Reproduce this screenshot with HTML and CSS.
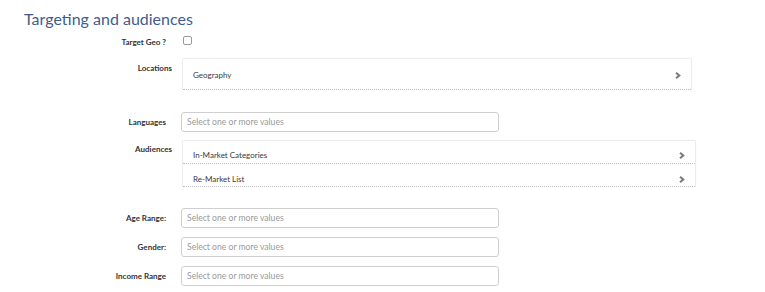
FILE: index.html
```html
<!DOCTYPE html>
<html>
<head>
<meta charset="utf-8">
<link rel="stylesheet" href="styles.css">
</head>
<body>
<h2 class="title">Targeting and audiences</h2>
<div class="form">
  <div class="row row-geo">
    <label class="label">Target Geo ?</label>
    <div class="field"><span class="checkbox"></span></div>
  </div>
  <div class="row row-locations">
    <label class="label label-panel">Locations</label>
    <div class="panel panel-locations">
      <div class="panel-item item-tall">
        <span>Geography</span>
        <svg class="chev" width="6" height="7" viewBox="0 0 6 7"><polyline points="1,0.8 4.3,3.5 1,6.2" fill="none" stroke="#7a7a7a" stroke-width="2"/></svg>
      </div>
    </div>
  </div>
  <div class="row row-languages">
    <label class="label">Languages</label>
    <div class="input">Select one or more values</div>
  </div>
  <div class="row row-audiences">
    <label class="label label-panel">Audiences</label>
    <div class="panel panel-audiences">
      <div class="panel-item">
        <span>In-Market Categories</span>
        <svg class="chev" width="6" height="7" viewBox="0 0 6 7"><polyline points="1,0.8 4.3,3.5 1,6.2" fill="none" stroke="#7a7a7a" stroke-width="2"/></svg>
      </div>
      <div class="panel-item">
        <span>Re-Market List</span>
        <svg class="chev" width="6" height="7" viewBox="0 0 6 7"><polyline points="1,0.8 4.3,3.5 1,6.2" fill="none" stroke="#7a7a7a" stroke-width="2"/></svg>
      </div>
    </div>
  </div>
  <div class="row row-age">
    <label class="label">Age Range:</label>
    <div class="input">Select one or more values</div>
  </div>
  <div class="row row-next">
    <label class="label">Gender:</label>
    <div class="input">Select one or more values</div>
  </div>
  <div class="row row-next">
    <label class="label">Income Range</label>
    <div class="input">Select one or more values</div>
  </div>
</div>
</body>
</html>
```

FILE: styles.css
```css
html, body {
  margin: 0;
  padding: 0;
  background: #ffffff;
}
body {
  font-family: Lato, "Open Sans", "Liberation Sans", sans-serif;
  color: #333333;
  width: 765px;
  height: 292px;
  overflow: hidden;
}
.title {
  margin: 0;
  padding: 8px 0 0 24px;
  font-size: 16px;
  line-height: 21px;
  font-weight: 400;
  color: #3f5d8c;
}
.form {
  display: flex;
  flex-direction: column;
}
.row {
  display: flex;
  align-items: flex-start;
}
.label {
  width: 166px;
  flex: 0 0 166px;
  text-align: right;
  font-size: 8px;
  font-weight: 700;
  line-height: 10px;
  color: #333333;
  padding-right: 15px;
  box-sizing: content-box;
}
.label-panel {
  width: 172px;
  flex: 0 0 172px;
  padding-right: 10px;
}
.row-geo {
  margin-top: 8px;
}
.field {
  padding-left: 2px;
}
.checkbox {
  display: block;
  width: 7px;
  height: 7px;
  border: 1px solid #9a9a9a;
  border-radius: 2px;
  background: #fff;
  margin-top: -1px;
}
.row-locations {
  margin-top: 11px;
}
.row-locations .label {
  padding-top: 5px;
}
.panel {
  border: 1px solid #ececec;
  border-bottom: none;
  border-radius: 2px 2px 0 0;
  box-shadow: 0 0 2px rgba(0, 0, 0, 0.04);
  box-sizing: border-box;
}
.panel-locations {
  width: 510px;
}
.panel-audiences {
  width: 514px;
}
.panel-item {
  display: flex;
  align-items: center;
  justify-content: space-between;
  font-size: 8px;
  line-height: 10px;
  color: #3a3a3a;
  border-bottom: 1px dotted #bdbdbd;
}
.panel-item.item-tall {
  padding: 11px 10px 9px 10px;
}
.panel-audiences .panel-item {
  padding: 9px 10px 3px 10px;
}
.panel-audiences .panel-item + .panel-item {
  padding: 10px 10px 2px 10px;
}
.chev {
  display: block;
  flex: 0 0 auto;
}
.row-languages {
  margin-top: 22px;
  align-items: center;
}
.input {
  width: 318px;
  height: 20px;
  box-sizing: border-box;
  border: 1px solid #cfcfcf;
  border-radius: 3px;
  padding: 0 5px;
  font-size: 8.6px;
  line-height: 18px;
  color: #9a9a9a;
}
.row-languages .label,
.row-age .label,
.row-next .label {
  align-self: center;
}
.row-audiences {
  margin-top: 8px;
}
.row-audiences .label {
  padding-top: 4px;
}
.row-age {
  margin-top: 21px;
  align-items: center;
}
.row-next {
  margin-top: 9px;
  align-items: center;
}
```
